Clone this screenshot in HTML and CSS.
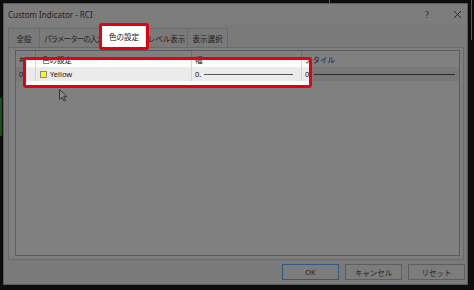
FILE: index.html
```html
<!DOCTYPE html>
<html lang="ja">
<head>
<meta charset="utf-8">
<title>Custom Indicator - RCI</title>
<link rel="stylesheet" href="styles.css">
</head>
<body>
<div class="screen">
  <div class="chart-line chart-right"></div>
  <div class="chart-line chart-left"></div>
  <div class="chart-line chart-top"></div>

  <div class="dialog">
    <div class="titlebar">
      <span class="title">Custom Indicator - RCI</span>
      <span class="help">?</span>
      <span class="close">
        <svg width="9" height="9" viewBox="0 0 9 9"><path d="M1 1L8 8M8 1L1 8" stroke="#2a2a2a" stroke-width="1" fill="none"/></svg>
      </span>
    </div>
    <div class="tabs">
      <div class="tab tab-general">全般</div>
      <div class="tab tab-param"><span class="narrow">パラメーターの入力</span></div>
      <div class="tab tab-color">色の設定</div>
      <div class="tab tab-level">レベル表示</div>
      <div class="tab tab-show">表示選択</div>
    </div>
    <div class="panel">
      <div class="grid">
        <div class="grow ghead">
          <div class="c c1">#</div>
          <div class="c c2 hpad">色の設定</div>
          <div class="c c3">幅</div>
          <div class="c c4">スタイル</div>
        </div>
        <div class="grow gdata">
          <div class="c c1">0</div>
          <div class="c c2"><span class="swatch"></span>Yellow</div>
          <div class="c c3">0.<span class="line line3"></span></div>
          <div class="c c4">0.<span class="line line4"></span></div>
        </div>
      </div>
    </div>
    <div class="buttons">
      <div class="btn btn-ok">OK</div>
      <div class="btn">キャンセル</div>
      <div class="btn">リセット</div>
    </div>
  </div>

  <div class="hl hl-tab">色の設定</div>
  <div class="hl hl-row">
    <div class="grid light">
      <div class="grow ghead">
        <div class="c c1">#</div>
        <div class="c c2 hpad">色の設定</div>
        <div class="c c3">幅</div>
        <div class="c c4">スタイル</div>
      </div>
      <div class="grow gdata">
        <div class="c c1">0</div>
        <div class="c c2"><span class="swatch"></span>Yellow</div>
        <div class="c c3">0.<span class="line line3"></span></div>
        <div class="c c4">0.<span class="line line4"></span></div>
      </div>
    </div>
  </div>

  <svg class="cursor" width="9" height="13" viewBox="0 0 9 13">
    <path d="M0.5 0.5 L0.5 10.5 L3 8.2 L5 12 L6.6 11.3 L4.7 7.7 L8 7.7 Z" fill="#8a8a8a" stroke="#2e2e2e" stroke-width="0.9"/>
  </svg>
</div>
</body>
</html>
```

FILE: styles.css
```css
* { box-sizing: border-box; }
html, body { margin: 0; padding: 0; }
body {
  width: 474px;
  height: 290px;
  overflow: hidden;
  background: #0d0d0d;
  font-family: "Noto Sans", "Noto Sans CJK JP", sans-serif;
  color: #1c1c1c;
}
.screen {
  position: relative;
  width: 474px;
  height: 290px;
  padding: 3px 6px 5px 3px;
}

/* chart remnants behind the dialog */
.chart-line { position: absolute; }
.chart-right { left: 471px; top: 0; width: 1px; height: 40px; background: #1f7f2a; }
.chart-left { left: 0; top: 98px; width: 2px; height: 38px; background: #17501c; }
.chart-top { left: 329px; top: 0; width: 1px; height: 3px; background: #5a5a5a; }

.dialog {
  width: 465px;
  height: 282px;
  background: #7a7a7a;
  border: 1px solid #5a5a5a;
  display: flex;
  flex-direction: column;
}

.titlebar {
  height: 21px;
  flex: none;
  display: flex;
  align-items: center;
  padding-left: 4px;
  font-size: 8px;
  background: #7d7d7d;
  color: #1e1e1e;
}
.title { flex: 1; }
.help { width: 8px; text-align: center; margin-right: 21px; font-size: 8px; }
.close { width: 10px; height: 9px; display: flex; align-items: center; justify-content: center; margin-right: 5px; }

.tabs {
  height: 22px;
  flex: none;
  display: flex;
  align-items: flex-end;
  padding-left: 4px;
}
.tab {
  height: 19px;
  display: flex;
  align-items: center;
  justify-content: center;
  font-size: 7.5px;
  border-top: 1px solid #6a6a6a;
  border-right: 1px solid #6a6a6a;
  background: #7a7a7a;
  white-space: nowrap;
  overflow: hidden;
}
.tab-general { width: 32px; border-left: 1px solid #6a6a6a; }
.tab-param { width: 63px; justify-content: flex-start; padding-left: 4px; }
.tab-param .narrow { letter-spacing: -0.9px; }
.tab-color { width: 43px; height: 21px; background: #808080; }
.tab-level { width: 42px; }
.tab-show { width: 40px; }

.panel {
  height: 213px;
  flex: none;
  margin: 0 3px 0 4px;
  border: 1px solid #6a6a6a;
  background: #7f7f7f;
  padding: 2px 3px 0 6px;
}

.grid {
  width: 445px;
  height: 206px;
  border: 1px solid #5c5c5c;
  background: #808080;
  display: flex;
  flex-direction: column;
}
.grow { display: flex; flex: none; }
.ghead { height: 16px; font-size: 7.5px; }
.gdata { height: 14px; font-size: 7.5px; background: #787878; }
.c {
  display: flex;
  align-items: center;
  padding-left: 3px;
  border-right: 1px solid #6c6c6c;
  white-space: nowrap;
  overflow: hidden;
}
.c1 { width: 20px; }
.c2 { width: 156px; padding-left: 4px; }
.c2.hpad { padding-left: 6px; }
.c3 { width: 110px; }
.c4 { flex: 1; border-right: none; }
.swatch {
  width: 7px;
  height: 7px;
  margin-right: 3px;
  background: #7f7f00;
  border: 1px solid #3a3a3a;
}
.line { height: 1px; background: #2b2b2b; margin-left: 3px; }
.line3 { flex: 1; margin-right: 8px; }
.line4 { flex: 1; margin-right: 4px; }

.buttons {
  flex: none;
  display: flex;
  justify-content: flex-end;
  gap: 6px;
  margin-top: 4px;
  padding-right: 2px;
}
.btn {
  width: 57px;
  height: 16px;
  display: flex;
  align-items: center;
  justify-content: center;
  font-size: 7.5px;
  border: 1px solid #5e5e5e;
  background: #7c7c7c;
  color: #222;
}
.btn-ok { border-color: #2f5a82; }

/* highlighted (undimmed) callouts */
.hl {
  position: absolute;
  border: 3px solid #e3000f;
  border-radius: 3px;
  background: #ffffff;
  overflow: hidden;
}
.hl-tab {
  left: 99px;
  top: 23px;
  width: 50px;
  height: 27px;
  display: flex;
  align-items: center;
  justify-content: center;
  font-size: 7.5px;
  color: #111;
}
.hl-row {
  left: 23px;
  top: 57px;
  width: 289px;
  height: 31px;
}
.grid.light {
  margin-left: -11px;
  margin-top: -10px;
  background: #ffffff;
  border-color: #d0d0d0;
  color: #111;
}
.grid.light .gdata { background: #ebebeb; }
.grid.light .c { border-right-color: #d4d4d4; }
.grid.light .swatch { background: #ffff00; border-color: #8a8a8a; }
.grid.light .line { background: #555; }

.cursor { position: absolute; left: 59px; top: 89px; }
```
